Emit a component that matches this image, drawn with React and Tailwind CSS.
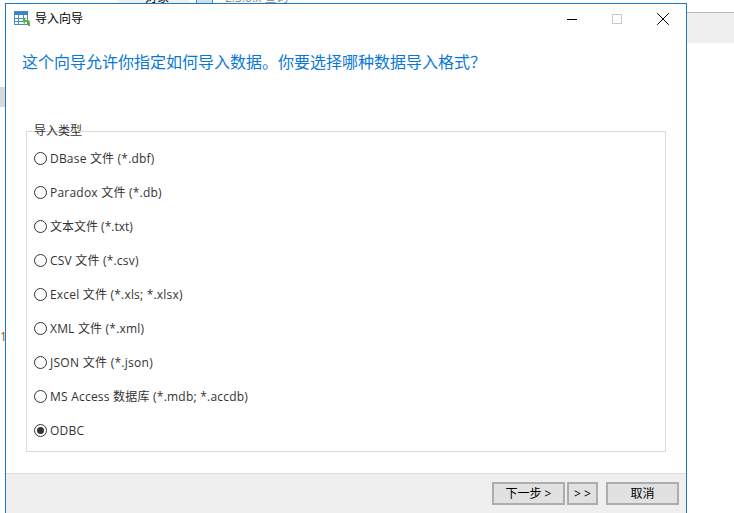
import { X } from 'lucide-react'

const sans = "font-['Open_Sans','Noto_Sans_CJK_SC',sans-serif]"

const types = [
  ['DBase 文件 (*.dbf)', 'tracking-[0.2px]'],
  ['Paradox 文件 (*.db)', 'tracking-[0.22px]'],
  ['文本文件 (*.txt)', ''],
  ['CSV 文件 (*.csv)', 'tracking-[0.2px]'],
  ['Excel 文件 (*.xls; *.xlsx)', 'tracking-[0.2px]'],
  ['XML 文件 (*.xml)', 'tracking-[0.2px]'],
  ['JSON 文件 (*.json)', 'tracking-[0.28px]'],
  ['MS Access 数据库 (*.mdb; *.accdb)', 'tracking-[0.22px]'],
  ['ODBC', 'tracking-[0.2px]'],
]

function TableIcon() {
  return (
    <svg width="17" height="16" viewBox="0 0 17 16" className="shrink-0">
      <rect x="0.5" y="0.5" width="13" height="13" fill="#fff" stroke="#4a8cc4" />
      <rect x="0" y="0" width="14" height="4" fill="#3f86c4" />
      <path d="M0 7.5h12M0 10.5h9M4.5 4v9M9.5 4v6" stroke="#4a8cc4" fill="none" />
      <path d="M8 10l3-3v2h2.5c1.5 0 2.5 1.2 2.5 3v3h-2v-3c0-.6-.3-1-1-1H11v2z" fill="#5cb531" />
    </svg>
  )
}

function Radio({ checked }) {
  return (
    <span className="w-[13px] h-[13px] -mt-[2px] rounded-full border border-[#333] flex items-center justify-center shrink-0 bg-white">
      {checked && <span className="w-[7px] h-[7px] rounded-full bg-[#333]" />}
    </span>
  )
}

function Btn({ children, className }) {
  return (
    <button className={`h-[23px] border-2 border-[#adadad] bg-[#e1e1e1] text-[12px] text-black flex items-center justify-center ${className}`}>
      {children}
    </button>
  )
}

export default function App() {
  return (
    <div className={`w-[734px] h-[513px] overflow-hidden bg-white relative ${sans}`}>
      {/* bits of the window behind the dialog */}
      <div className="h-[3px] ml-[118px] w-[72px] bg-[#f0f0f0] overflow-hidden">
        <div className="ml-[27px] -mt-[9px] text-[12px] leading-[14px] text-black">对象</div>
      </div>
      <div className="absolute left-[196px] top-0 w-[17px] h-[3px] border-x border-[#4a8cc4] bg-[#cfe0f0]" />
      <div className="absolute left-[225px] top-0 h-[3px] w-[72px] overflow-hidden">
        <div className="-mt-[9px] text-[12px] leading-[14px] text-[#888] whitespace-nowrap">2.3.0.x 查询</div>
      </div>
      <div className="absolute left-[687px] top-[12px] w-[47px] h-[31px] bg-[#efefef] border-t border-[#b9b9b9]" />
      <div className="absolute left-0 top-[87px] w-[5px] h-[20px] bg-[#d9d9d9]" />
      <div className="absolute left-0 top-[330px] text-[12px] leading-[14px] text-[#8a5a10]">1</div>

      <div className="ml-[5px] w-[682px] h-[510px] border-x border-t border-[#1979c9] bg-white flex flex-col">
        <div className="h-[30px] flex items-center pl-[8px] shrink-0">
          <TableIcon />
          <span className="ml-[4px] text-[12px] text-black">导入向导</span>
          <div className="ml-auto flex items-center">
            <span className="w-[10px] h-px bg-black mr-[35px]" />
            <span className="w-[10px] h-[10px] border border-[#c9c9c9] mr-[30px]" />
            <X size={22} strokeWidth={1} className="text-black mr-[12px]" absoluteStrokeWidth />
          </div>
        </div>

        <div className="flex-1 flex flex-col min-h-0">
          <h1 className="mt-[16px] ml-[16px] text-[16px] leading-[24px] font-normal text-[#0a78d7]">
            这个向导允许你指定如何导入数据。你要选择哪种数据导入格式？
          </h1>
          <fieldset className="mt-[57px] ml-[20px] w-[640px] h-[321px] border border-[#dcdcdc] relative">
            <legend className="absolute left-[7px] -top-[8px] text-[12px] leading-[14px] text-[#333]">导入类型</legend>
            <div className="pt-[10px] pl-[7px] flex flex-col">
              {types.map(([label, spacing], i) => (
                <label key={label} className="h-[34px] flex items-center gap-[3px] text-[12px] text-[#333]">
                  <Radio checked={i === types.length - 1} />
                  <span className={spacing}>{label}</span>
                </label>
              ))}
            </div>
          </fieldset>
        </div>

        <div className="h-[40px] shrink-0 bg-[#efefef] border-t border-[#dcdcdc] flex items-center justify-end pr-[7px]">
          <Btn className="w-[73px]">下一步 &gt;</Btn>
          <Btn className="w-[31px] ml-[2px]">&gt; &gt;</Btn>
          <Btn className="w-[73px] ml-[8px]">取消</Btn>
        </div>
      </div>
    </div>
  )
}
